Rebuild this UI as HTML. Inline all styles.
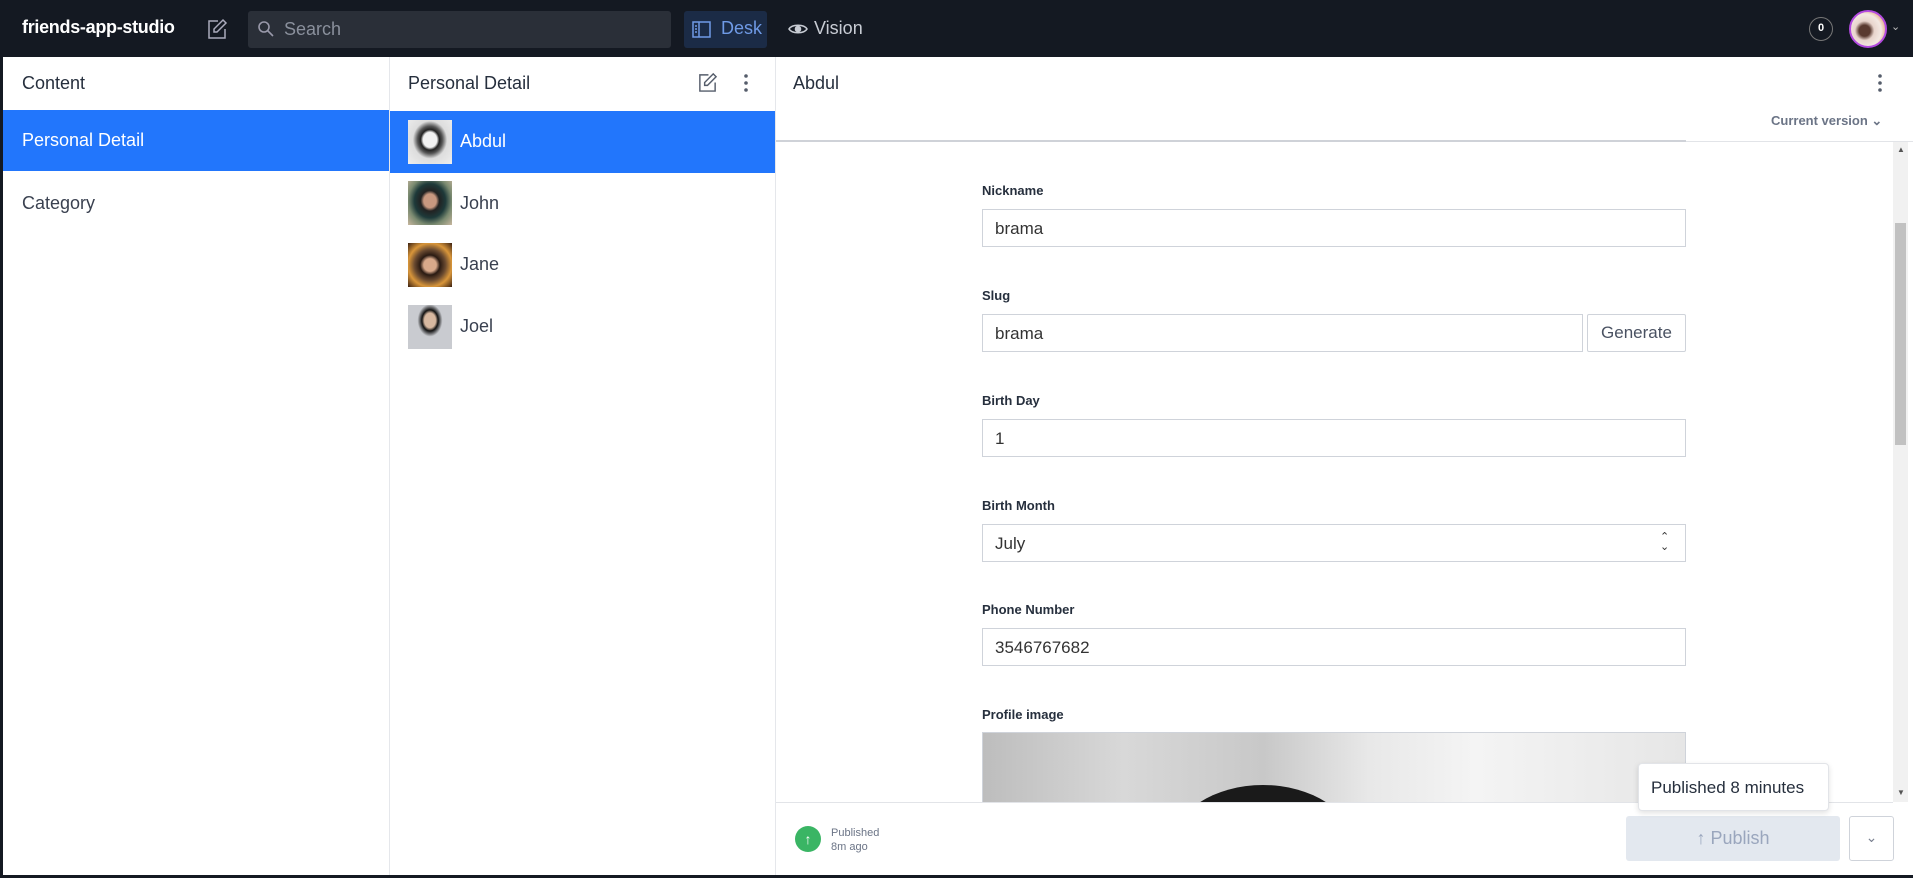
<!DOCTYPE html>
<html><head><meta charset="utf-8"><style>
*{box-sizing:border-box;margin:0;padding:0}
body{width:1913px;height:878px;overflow:hidden;font-family:"Liberation Sans",sans-serif;background:#fff;position:relative;color:#262f3d}
.abs{position:absolute}
.top{left:0;top:0;width:1913px;height:57px;background:#141922}
.pane{top:57px;bottom:3px;background:#fff}
.lbl{position:absolute;left:982px;font-size:13px;font-weight:bold;color:#262f3d}
.inp{position:absolute;left:982px;width:704px;height:38px;border:1px solid #cfd3da;font-size:17px;color:#333;padding:9px 12px;background:#fff}
.av{position:absolute;left:408px;width:44px;height:44px}
.row{position:absolute;font-size:18px;color:#3a4150}
</style></head><body>
<div class="abs top"></div>
<div class="abs" style="left:22px;top:17px;font-size:18px;font-weight:bold;color:#fff;letter-spacing:-0.3px">friends-app-studio</div>
<svg class="abs" style="left:206px;top:18px" width="22" height="22" viewBox="0 0 22 22" fill="none" stroke="#aab" stroke-width="1.5"><path d="M12 3H3v17h16v-9"/><path d="M17 2l3 3-9 9H8v-3z"/></svg>
<div class="abs" style="left:248px;top:11px;width:423px;height:37px;background:#2a2f38;border-radius:3px"></div>
<svg class="abs" style="left:257px;top:20px" width="18" height="18" viewBox="0 0 18 18" fill="none" stroke="#99a" stroke-width="1.6"><circle cx="7" cy="7" r="5"/><path d="M11 11l5 5"/></svg>
<div class="abs" style="left:284px;top:19px;font-size:18px;color:#8a909c">Search</div>
<div class="abs" style="left:684px;top:11px;width:83px;height:37px;background:#1b2b46;border-radius:3px"></div>
<svg class="abs" style="left:692px;top:20px" width="19" height="19" viewBox="0 0 19 19" fill="none" stroke="#6f9ae6" stroke-width="1.5"><rect x="1" y="2" width="17" height="15"/><path d="M7 2v15M3 6h2M3 9h2M3 12h2"/></svg>
<div class="abs" style="left:721px;top:18px;font-size:18px;color:#6f9ae6">Desk</div>
<svg class="abs" style="left:788px;top:21px" width="20" height="16" viewBox="0 0 20 16" fill="none" stroke="#c8ccd4" stroke-width="1.6"><path d="M1 8c3-5 15-5 18 0-3 5-15 5-18 0z"/><circle cx="10" cy="8" r="2.5" fill="#c8ccd4"/></svg>
<div class="abs" style="left:814px;top:18px;font-size:18px;color:#c8ccd4">Vision</div>
<div class="abs" style="left:1809px;top:17px;width:24px;height:24px;border:1.5px solid #777;border-radius:50%;color:#fff;font-size:11px;font-weight:bold;text-align:center;line-height:21px">0</div>
<div class="abs" style="left:1849px;top:10px;width:38px;height:38px;border:2px solid #b34ae0;border-radius:50%;background:radial-gradient(circle at 40% 55%,#5a3a30 0 20%,#e8d4cc 35%,#f3e8e2 60%,#e9b598 75%)"></div>
<div class="abs" style="left:1891px;top:20px;font-size:11px;color:#bbb">⌄</div>
<div class="abs" style="left:0;top:57px;width:3px;height:821px;background:#141922"></div>
<div class="abs" style="left:0;top:875px;width:1913px;height:3px;background:#141922"></div>
<!-- left pane -->
<div class="abs" style="left:389px;top:57px;width:1px;height:818px;background:#e5e7eb"></div>
<div class="abs" style="left:775px;top:57px;width:1px;height:818px;background:#e5e7eb"></div>
<div class="abs" style="left:22px;top:73px;font-size:18px;color:#262f3d">Content</div>
<div class="abs" style="left:3px;top:110px;width:386px;height:61px;background:#2276fc"></div>
<div class="abs" style="left:22px;top:130px;font-size:18px;color:#fff">Personal Detail</div>
<div class="abs" style="left:22px;top:193px;font-size:18px;color:#3a4150">Category</div>
<!-- middle -->
<div class="abs" style="left:408px;top:73px;font-size:18px;color:#262f3d">Personal Detail</div>
<svg class="abs" style="left:697px;top:72px" width="21" height="21" viewBox="0 0 22 22" fill="none" stroke="#555d6b" stroke-width="1.5"><path d="M12 3H3v17h16v-9"/><path d="M17 2l3 3-9 9H8v-3z"/></svg>
<svg class="abs" style="left:743px;top:73px" width="6" height="20"><circle cx="3" cy="3" r="1.8" fill="#555d6b"/><circle cx="3" cy="10" r="1.8" fill="#555d6b"/><circle cx="3" cy="17" r="1.8" fill="#555d6b"/></svg>
<div class="abs" style="left:390px;top:111px;width:385px;height:62px;background:#2276fc"></div>
<div class="av" style="top:120px;background:radial-gradient(ellipse at 50% 45%,#f2f2f2 0 22%,#222 30%,#555 40%,#ddd 55%,#eee)"></div>
<div class="row" style="left:460px;top:131px;color:#fff">Abdul</div>
<div class="av" style="top:181px;background:radial-gradient(ellipse at 50% 45%,#c89880 0 20%,#222 30%,#1e3a3a 50%,#7a8a70 70%,#c9b8a0)"></div>
<div class="row" style="left:460px;top:193px">John</div>
<div class="av" style="top:243px;background:radial-gradient(ellipse at 50% 50%,#d9a98a 0 20%,#2a1a12 32%,#6a4a30 50%,#d9963a 70%,#3a2010)"></div>
<div class="row" style="left:460px;top:254px">Jane</div>
<div class="av" style="top:305px;background:radial-gradient(ellipse at 50% 35%,#d7b8a0 0 18%,#111 26%,#c9cbd0 40%),linear-gradient(#c9cbd0 60%,#111 60%)"></div>
<div class="row" style="left:460px;top:316px">Joel</div>
<!-- right -->
<div class="abs" style="left:793px;top:73px;font-size:18px;color:#262f3d">Abdul</div>
<svg class="abs" style="left:1877px;top:73px" width="6" height="20"><circle cx="3" cy="3" r="1.8" fill="#555d6b"/><circle cx="3" cy="10" r="1.8" fill="#555d6b"/><circle cx="3" cy="17" r="1.8" fill="#555d6b"/></svg>
<div class="abs" style="left:1771px;top:113px;font-size:13px;font-weight:bold;color:#6b7486">Current version ⌄</div>
<div class="abs" style="left:776px;top:141px;width:1137px;height:1px;background:#e2e4e8"></div>
<div class="abs" style="left:776px;top:140px;width:910px;height:2px;background:#cfd2d8"></div>
<div class="abs" style="left:1893px;top:142px;width:15px;height:660px;background:#f1f1f1"></div>
<div class="abs" style="left:1895px;top:223px;width:11px;height:222px;background:#c1c1c1"></div>
<div class="abs" style="left:1897px;top:145px;font-size:8px;color:#555">▲</div>
<div class="abs" style="left:1897px;top:788px;font-size:8px;color:#555">▼</div>

<div class="lbl" style="top:183px">Nickname</div>
<div class="inp" style="top:209px">brama</div>
<div class="lbl" style="top:288px">Slug</div>
<div class="inp" style="top:314px;width:601px">brama</div>
<div class="abs" style="left:1587px;top:314px;width:99px;height:38px;border:1px solid #cfd3da;border-radius:2px;font-size:17px;color:#4a5262;text-align:center;line-height:36px">Generate</div>
<div class="lbl" style="top:393px">Birth Day</div>
<div class="inp" style="top:419px">1</div>
<div class="lbl" style="top:498px">Birth Month</div>
<div class="inp" style="top:524px">July</div>
<div class="abs" style="left:1660px;top:532px;font-size:11px;line-height:10px;color:#333">&#8963;<br>&#8964;</div>
<div class="lbl" style="top:602px">Phone Number</div>
<div class="inp" style="top:628px">3546767682</div>
<div class="lbl" style="top:707px">Profile image</div>
<div class="abs" style="left:982px;top:732px;width:704px;height:70px;border:1px solid #cfd3da;border-bottom:none;overflow:hidden;background:linear-gradient(90deg,#bdbdbd,#d8d8d8 20%,#c8c8c8 40%,#e8e8e8 55%,#f4f4f4 70%,#e6e6e6 100%)">
<div style="position:absolute;left:190px;top:52px;width:180px;height:120px;border-radius:50%;background:#1a1a1a"></div></div>
<!-- footer -->
<div class="abs" style="left:776px;top:802px;width:1117px;height:1px;background:#e2e4e8"></div>
<div class="abs" style="left:776px;top:803px;width:1137px;height:72px;background:#fff"></div>
<div class="abs" style="left:795px;top:826px;width:26px;height:26px;border-radius:50%;background:#3ab564;color:#fff;font-size:14px;text-align:center;line-height:26px">↑</div>
<div class="abs" style="left:831px;top:826px;font-size:11px;color:#6b7486;line-height:14px">Published<br>8m ago</div>
<div class="abs" style="left:1626px;top:816px;width:214px;height:45px;background:#e3e8ef;border-radius:3px;color:#9aa6bd;font-size:18px;text-align:center;line-height:45px">↑ Publish</div>
<div class="abs" style="left:1849px;top:816px;width:45px;height:45px;border:1px solid #cfd3da;border-radius:3px;color:#7a8090;text-align:center;line-height:40px;font-size:14px">⌄</div>
<div class="abs" style="left:1638px;top:763px;width:191px;height:48px;background:#fff;border:1px solid #e2e4e8;border-radius:4px;box-shadow:0 2px 6px rgba(0,0,0,.12);font-size:17px;color:#262f3d;padding:14px 12px;white-space:nowrap">Published 8 minutes</div>
</body></html>
